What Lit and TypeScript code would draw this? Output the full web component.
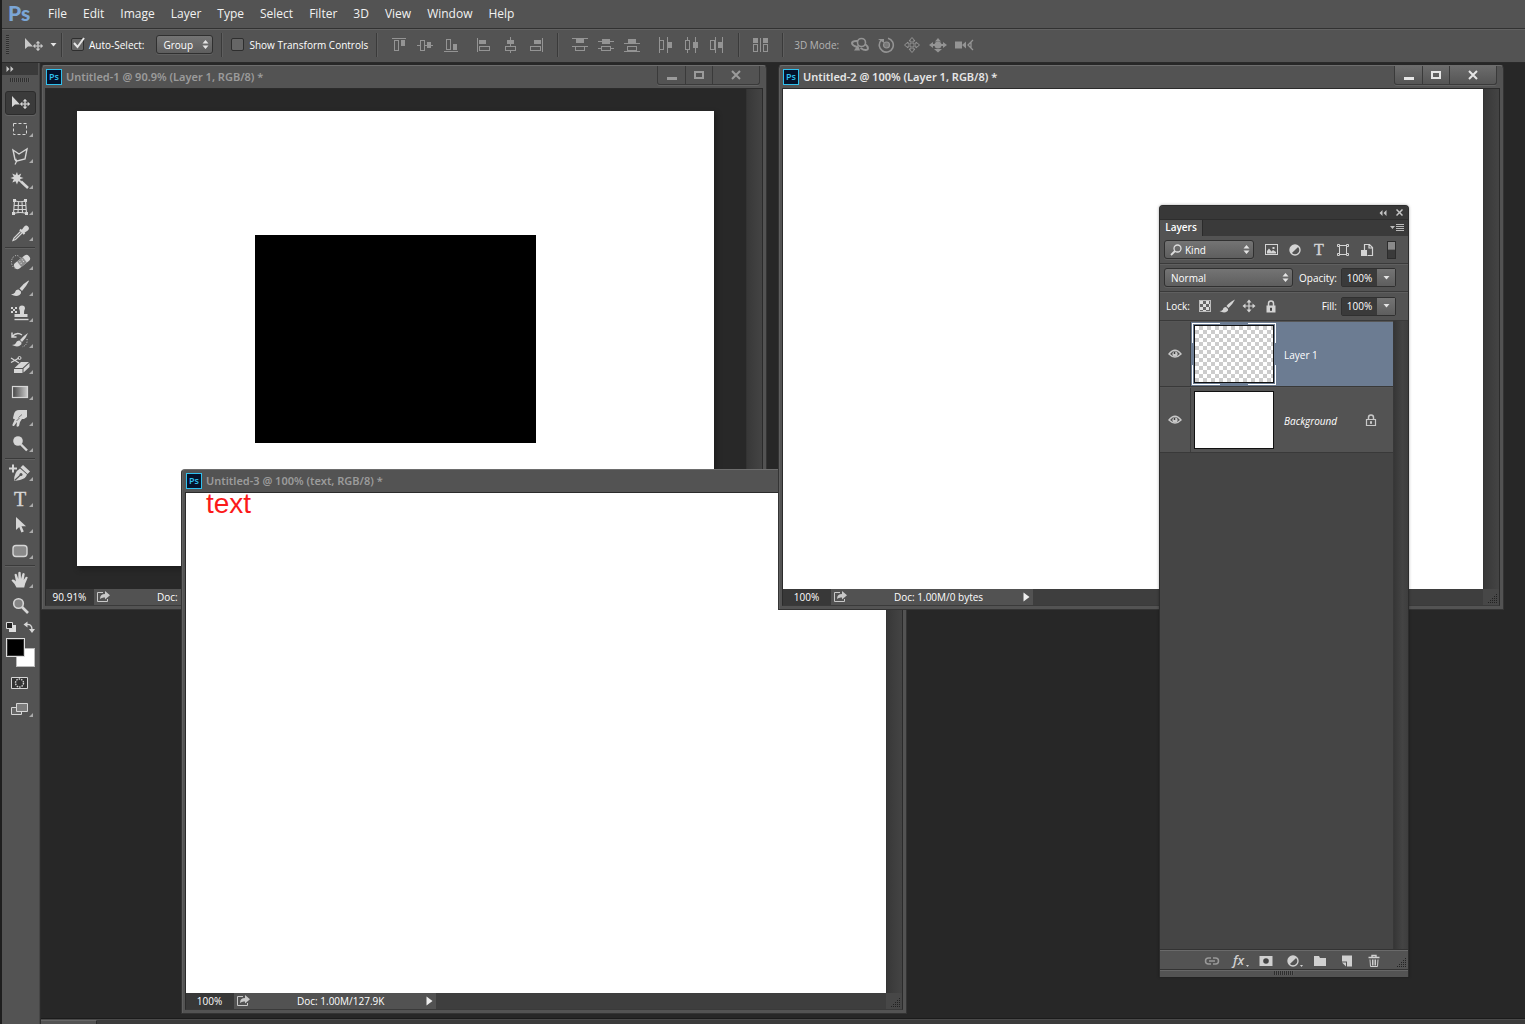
import { LitElement, html, svg, css, TemplateResult } from "lit";
import { customElement, property } from "lit/decorators.js";
import { classMap } from "lit/directives/class-map.js";

/* ---------- icon drawings ---------- */

const cross = (x: number, y: number) => svg`<g transform="translate(${x} ${y})">
  <path d="M0 -5l2 2.2h-1.4v2.2h2.2v-1.4l2.2 2l-2.2 2v-1.4h-2.2v2.2h1.4l-2 2.2l-2-2.2h1.4v-2.2h-2.2v1.4l-2.2-2l2.2-2v1.4h2.2v-2.2h-1.4z" fill="currentColor" stroke="currentColor" stroke-width="0.300"/></g>`;

const moveArt = svg`<path d="M5 6v11l3-2.600h5z" fill="currentColor"/>${cross(18, 14)}`;

const eyeArt = svg`<path d="M1 7q6-7.500 12 0q-6 6-12 0z" fill="none" stroke="currentColor" stroke-width="1.400"/><circle cx="7" cy="7" r="2.600" fill="currentColor"/><circle cx="6.500" cy="6" r="0.900" fill="#333"/>`;

const lockArt = svg`<path d="M4.500 7V4.500q0-2.500 2.500-2.500t2.500 2.500V7" fill="none" stroke="currentColor" stroke-width="1.500"/><path d="M2.500 6.500h9v7h-9z" fill="currentColor"/><path d="M6.500 9h1v2.500h-1z" stroke="#444" fill="#444"/>`;

const lockOpenArt = svg`<path d="M4.500 7V4.500q0-2.500 2.500-2.500t2.500 2.500V7" fill="none" stroke="currentColor" stroke-width="1.500"/><path d="M2.500 6.500h9v6h-9z" fill="#555" stroke="currentColor" stroke-width="1.200"/><path d="M6.500 8.500h1v2h-1z" fill="currentColor" stroke="currentColor"/>`;

const halfCircle = svg`<circle cx="7" cy="7" r="5" fill="none" stroke="currentColor" stroke-width="1.400"/><path d="M10.600 3.400A5 5 0 0 0 3.400 10.600z" fill="currentColor"/>`;

/* tool palette, 26 x 26 */
const TOOLS: Record<string, TemplateResult<2>> = {
  move: moveArt,
  marquee: svg`<rect x="6.500" y="7.500" width="13" height="11" fill="none" stroke="currentColor" stroke-dasharray="3 2"/>`,
  lasso: svg`<path d="M6 8l6 4l8-5l-2 10l-8 2l-2-1.500z" fill="none" stroke="currentColor" stroke-width="1.400"/><path d="M9.500 17q-2 1 0 2.500l-1.500 3" fill="none" stroke="currentColor" stroke-width="1.200"/>`,
  wand: svg`<path d="M10 4l1 3.200l3.200-1.700l-1.200 3.200l3.500 1.300l-3.500 1.200l1.500 3.300l-3.300-1.300l-1.200 3.300l-1.500-3.300l-3.200 1.300l1.500-3.300l-3.300-1.200l3.300-1.300l-1.600-3.200l3.300 1.500z" fill="currentColor"/><path d="M14 13.500l7 6.500" stroke="currentColor" stroke-width="2.600"/>`,
  crop: svg`<path d="M7.500 6.500q6 2.500 11 0l1 13q-6-2-13 0zM7 11.500h12M7 15.500h12.500M11.500 7.500l-.500 11M15 7.500l.5 11" fill="none" stroke="currentColor" stroke-width="1.100"/><path d="M6 5h3v3h-3zM17 5h3v3h-3zM5 18h3v3h-3zM18 18h3v3h-3z" fill="currentColor"/>`,
  dropper: svg`<path d="M13 9.500l4.500 4.500" stroke="currentColor" stroke-width="2.200"/><path d="M15 11l2.500-3.500q1.500-2 3-.5t-.5 3L16.500 12.500z" fill="currentColor" stroke="currentColor" stroke-width="1.600"/><path d="M13.500 11.500l-6.500 6.500l-1 2.500l2.500-1l6.500-6.500" fill="none" stroke="currentColor" stroke-width="1.200"/>`,
  heal: svg`<ellipse cx="9.500" cy="13" rx="5" ry="6.500" fill="none" stroke="currentColor" stroke-dasharray="1 1.500"/><g transform="rotate(-38 15 13)"><rect x="6" y="9.500" width="18" height="7" rx="3" fill="currentColor"/><rect x="11.500" y="9.500" width="7" height="7" fill="#8b8b8b"/><path d="M13.500 11v4M16.500 11v4" stroke="#ddd" stroke-dasharray="1 1"/></g>`,
  brush: svg`<path d="M21.500 5.500q-4.500 2.500-9 8l2.500 2.500q4.500-5 7-10z" fill="currentColor"/><path d="M11.500 14.500q-3 0-3.500 3q-1 1.500-4 2q5 2.500 8.500.500q2-1.500 1.500-3.500z" fill="currentColor"/>`,
  stamp: svg`<path d="M4 6h2v2h-2zM8 6h2v2h-2zM6 8h2v2h-2zM4 10h2v2h-2zM8 10h2v2h-2z" fill="currentColor"/><path d="M12 7.500a3 3 0 1 1 6 0q-1.500 3-1 5.500h3.500v3h-13v-3h5.500q.5-2.500-1-5.500z" fill="currentColor"/><path d="M7.500 18.500h14" stroke="currentColor" stroke-width="1.400"/>`,
  history: svg`<path d="M5 9.500q5-5 10-1.500M5 5.500v4.500h4.500" fill="none" stroke="currentColor" stroke-width="1.500"/><path d="M21 6q-5 3-8 7l2 2q4-4 6-9z" fill="currentColor"/><path d="M12.500 13.500q-3 0-3.500 2.500q-1 2-4 2q5 2.500 8 .500q2-1 1.500-3z" fill="currentColor"/><path d="M20 12q1 6-5 8" fill="none" stroke="currentColor" stroke-dasharray="1 1.500"/>`,
  eraser: svg`<path d="M7.500 15l6.500-6h8l-6.500 6zM7 16h8.500v4h-8.500zM16.500 19.500v-4l6-5.500v4z" fill="currentColor"/><path d="M4 5l8 5M4 9.500l8-4.500" stroke="currentColor" stroke-width="1.200"/><circle cx="12.500" cy="5" r="1.500" fill="none" stroke="currentColor"/>`,
  gradient: svg`<defs><linearGradient id="gt"><stop offset="0" stop-color="#444"/><stop offset="1" stop-color="#ccc"/></linearGradient></defs><rect x="5.500" y="7.500" width="15" height="11" fill="url(#gt)" stroke="currentColor" stroke-width="1.200"/>`,
  smudge: svg`<path d="M7 9q1-4 5-4h8v7l-3 2h-2l-2 3l-1 4q-2 1.500-2.500 0l.5-4l-3 4q-2 .5-1.500-1.500l2.500-5.500q-2 .5-2-1z" fill="currentColor"/><path d="M11.500 12.500l3.500-3M9.500 16l3-3" stroke="#777"/>`,
  dodge: svg`<circle cx="11" cy="10" r="4.800" fill="currentColor"/><path d="M14 13.500l6 6" stroke="currentColor" stroke-width="2.400"/>`,
  pen: svg`<path d="M2 8.500h8M6 4.500v8" stroke="currentColor" stroke-width="2"/><path d="M16 5l7 6.500l-2.500 2.500l-7-6.500z" fill="currentColor"/><path d="M13 8.500l7 6q-1 4-7 5.500l-6 1q0-9 6-12.500z" fill="currentColor"/><path d="M7.500 20.500l6-5.500" stroke="#555" stroke-width="1.200"/><circle cx="14" cy="14.500" r="1.500" fill="#555"/>`,
  type: svg`<text x="13" y="20" text-anchor="middle" font-family="Liberation Serif, serif" font-size="20" fill="currentColor" stroke="currentColor" stroke-width="0.400">T</text>`,
  select: svg`<path d="M9 5v13l3.200-3l2.200 5.500l2.400-1l-2.300-5.300h4.500z" fill="currentColor"/>`,
  shape: svg`<rect x="6" y="7.500" width="14" height="11" rx="3" fill="#8a8a8a" stroke="currentColor" stroke-width="1.400"/>`,
  hand: svg`<path d="M9.500 20.500q-1-3-5-7q1-2 3.500 0l1 1l-1.500-7q1.500-1.500 2.300 0l1.500 4.500v-6.500q1.500-1.500 2.400 0l.3 6.500l1.500-5.500q1.500-1 2.200.5l-1 6l2-3q1.500-.8 2 .5q-1.500 4-2.500 6l-1 4z" fill="currentColor"/>`,
  zoom: svg`<circle cx="11.500" cy="10.500" r="4.800" fill="#858585" stroke="currentColor" stroke-width="1.600"/><path d="M15 14l6 6" stroke="currentColor" stroke-width="2.600"/>`,
};

/* alignment buttons, 16 x 16 */
const o = (x: number, y: number, w: number, h: number) =>
  svg`<rect x=${x + 0.5} y=${y + 0.5} width=${w - 1} height=${h - 1} fill="none" stroke="currentColor"/>`;
const f = (x: number, y: number, w: number, h: number) =>
  svg`<rect x=${x} y=${y} width=${w} height=${h} fill="currentColor"/>`;

const ALIGN: [string, TemplateResult<2>][][] = [
  [
    ["Align top edges", svg`${f(1, 1, 14, 1)}${o(3, 3, 5, 11)}${f(10, 3, 4, 6)}`],
    ["Align vertical centers", svg`${f(0, 8, 3, 1)}${o(3, 3, 5, 11)}${f(8, 8, 8, 1)}${f(10, 5, 4, 6)}`],
    ["Align bottom edges", svg`${f(1, 14, 14, 1)}${o(3, 2, 5, 11)}${f(10, 7, 4, 6)}`],
  ],
  [
    ["Align left edges", svg`${f(1, 1, 1, 14)}${f(3, 3, 7, 4)}${o(3, 9, 11, 5)}`],
    ["Align horizontal centers", svg`${f(8, 0, 1, 3)}${f(5, 3, 7, 4)}${f(8, 6, 1, 3)}${o(3, 9, 11, 5)}${f(8, 13, 1, 3)}`],
    ["Align right edges", svg`${f(14, 1, 1, 14)}${f(6, 3, 7, 4)}${o(2, 9, 11, 5)}`],
  ],
  [
    ["Distribute top edges", svg`${f(0, 1, 16, 1)}${f(4, 2, 8, 4)}${f(0, 9, 16, 1)}${o(3, 9, 10, 5)}`],
    ["Distribute vertical centers", svg`${f(0, 4, 16, 1)}${f(4, 2, 8, 5)}${f(0, 11, 3, 1)}${o(3, 9, 10, 5)}${f(13, 11, 3, 1)}`],
    ["Distribute bottom edges", svg`${f(4, 2, 8, 4)}${f(0, 6, 16, 1)}${o(3, 9, 10, 5)}${f(0, 14, 16, 1)}`],
  ],
  [
    ["Distribute left edges", svg`${f(2, 0, 1, 16)}${o(2, 3, 5, 10)}${f(10, 0, 1, 16)}${f(11, 5, 4, 6)}`],
    ["Distribute horizontal centers", svg`${f(4, 0, 1, 3)}${o(2, 3, 5, 10)}${f(4, 13, 1, 3)}${f(12, 0, 1, 16)}${f(10, 5, 5, 6)}`],
    ["Distribute right edges", svg`${o(1, 3, 5, 10)}${f(6, 0, 1, 16)}${f(9, 5, 4, 6)}${f(13, 0, 1, 16)}`],
  ],
  [["Auto-align layers", svg`${f(0, 1, 5, 5)}${o(0, 7, 5, 8)}${f(7, 1, 1, 14)}${f(10, 1, 5, 5)}${o(10, 7, 5, 8)}`]],
];

/* 3D modes, 20 x 16 */
const MODES: [string, TemplateResult<2>][] = [
  ["Rotate the 3D object", svg`<circle cx="11.500" cy="5.500" r="4" fill="none" stroke="currentColor" stroke-width="1.600"/><path d="M8 4q-5.500-.5-6 2q0 2.500 5 4M15 7q4 3 2.500 5.500q-2.500 1.500-7-1.500" fill="none" stroke="currentColor" stroke-width="2"/><path d="M4 13.500h6l-2-6z" fill="currentColor"/>`],
  ["Roll the 3D object", svg`<path d="M5 3.500a7 7 0 1 0 7-2.200" fill="none" stroke="currentColor" stroke-width="1.600"/><circle cx="10.500" cy="8" r="3" fill="#777" stroke="currentColor" stroke-width="1.200"/><path d="M2 2h6v4z" fill="currentColor"/>`],
  ["Drag the 3D object", svg`<path d="M10 .5l3 3.500h-2v3h3v-2l3.500 3l-3.500 3v-2h-3v3h2l-3 3.500l-3-3.500h2v-3h-3v2l-3.500-3l3.500-3v2h3v-3h-2z" fill="none" stroke="currentColor"/>`],
  ["Slide the 3D object", svg`<path d="M10 1l3 3.500h-6zM10 15.500l4-3.500h-8zM1 8l4-3v6zM19 8l-4-3v6z" fill="currentColor"/><path d="M5 8h10" stroke="currentColor" stroke-width="2"/><circle cx="10" cy="8" r="3.500" fill="currentColor"/>`],
  ["Zoom the 3D camera", svg`<path d="M1 4.500h7v7h-7zM8 8l4-3.500v7z" fill="currentColor"/><path d="M19 3l-5 5l5 5M17 5v6" fill="none" stroke="currentColor" stroke-width="1.300"/>`],
];

const TOOL_GROUPS = [
  ["move", "marquee", "lasso", "wand", "crop", "dropper"],
  ["heal", "brush", "stamp", "history", "eraser", "gradient", "smudge", "dodge"],
  ["pen", "type", "select", "shape"],
  ["hand", "zoom"],
];

const MENUS = ["File", "Edit", "Image", "Layer", "Type", "Select", "Filter", "3D", "View", "Window", "Help"];

const base = css`
  * { box-sizing: border-box; }
  button, select, input { font: inherit; color: inherit; margin: 0; padding: 0; border: 0; border-radius: 0; background: none; }
  button { display: flex; align-items: center; justify-content: center; }
  svg { display: block; flex: none; }
`;

const fieldStyles = css`
  .pick { position: relative; display: flex; align-items: center; }
  .pick select {
    appearance: none; width: 100%; height: 19px; padding: 0 6px;
    border: 1px solid #303030; border-radius: 3px; color: #fff;
    background: linear-gradient(#747474, #5e5e5e); box-shadow: 0 1px #606060;
  }
  .pick .updown { position: absolute; right: 4px; top: 5px; pointer-events: none; }
`;

const upDown = html`<svg class="updown" width="7" height="9" viewBox="0 0 7 9" fill="#e4e4e4"><path d="M3.500 0L6.500 3.500h-6zM3.500 9L6.500 5.500h-6z"/></svg>`;
const caret = html`<svg width="7" height="4" viewBox="0 0 7 4"><path d="M0.500 0h6L3.500 3.500z" fill="#e4e4e4"/></svg>`;
const sizeGrip = html`<svg width="12" height="12" viewBox="0 0 12 12" fill="#222"><path d="M9 1h1v1h-1zM7 3h1v1h-1zM9 3h1v1h-1zM5 5h1v1h-1zM7 5h1v1h-1zM9 5h1v1h-1zM3 7h1v1h-1zM5 7h1v1h-1zM7 7h1v1h-1zM9 7h1v1h-1zM1 9h1v1h-1zM3 9h1v1h-1zM5 9h1v1h-1zM7 9h1v1h-1zM9 9h1v1h-1z"/></svg>`;

/* ---------- document window ---------- */

@customElement("doc-window")
class DocWindow extends LitElement {
  @property() name = "";
  @property() zoom = "100%";
  @property() info = "Doc:";
  @property({ type: Boolean, reflect: true }) active = false;

  static styles = [base, css`
    :host {
      display: grid; grid-template-rows: 22px 1fr 3px; padding: 0 3px;
      border: 1px solid #343434; border-top-color: #6d6d6d; border-radius: 4px 4px 0 0;
      background: #535353; color: #9b9b9b;
      box-shadow: inset 1px 0 #606060;
    }
    :host([active]) { color: #e6e6e6; }
    .title { display: flex; align-items: center; gap: 4px; }
    .badge {
      width: 16px; height: 16px; margin-left: 1px; border: 1px solid #2fc1ef; background: #04122a; color: #2fc1ef;
      font: 600 9px/13px "Open Sans", sans-serif; text-align: center;
    }
    h2 { margin: 0; flex: 1; font: 600 11px/16px "Noto Sans", sans-serif; white-space: nowrap; }
    .ctl { display: flex; align-self: start; margin-right: 3px; border: 1px solid #3a3a3a; border-top: 0; border-radius: 0 0 3px 3px; box-shadow: 0 1px #636363; }
    .ctl button { width: 27px; height: 18px; }
    .ctl button + button { border-left: 1px solid #3a3a3a; }
    .ctl button:last-child { width: 47px; }
    :host([active]) .ctl { background: linear-gradient(#6c6c6c, #555); }
    .inner { display: grid; grid-template-columns: 1fr 16px; grid-template-rows: 1fr 16px; border: 1px solid #2b2b2b; border-bottom-color: #3a3a3a; min-height: 0; }
    .page { display: flex; background: #282828; overflow: hidden; }
    .vbar { background: linear-gradient(90deg, #383838, #444); border-left: 1px solid #333; }
    .status { display: flex; background: #3e3e3e; color: #fff; font: 10px/16px "Open Sans", sans-serif; }
    .status input { width: 48px; padding-right: 1px; text-align: center; background: #383838; color: #fff; }
    .cells { display: flex; align-items: center; width: 202px; background: #525252; }
    .cells span { flex: 1; padding-left: 45px; white-space: nowrap; }
    .cells .more { width: 14px; }
    .corner { display: flex; align-items: end; justify-content: end; background: #474747; }
  `];

  render() {
    return html`
      <div class="title">
        <span class="badge">Ps</span>
        <h2>${this.name}</h2>
        <div class="ctl">
          <button aria-label="Minimize"><svg width="12" height="12" viewBox="0 0 12 12"><path d="M1 8h10v3h-10z" fill="currentColor"/></svg></button>
          <button aria-label="Maximize"><svg width="12" height="12" viewBox="0 0 12 12"><path d="M2 3h8v6h-8z" fill="none" stroke="currentColor" stroke-width="2"/></svg></button>
          <button aria-label="Close"><svg width="12" height="12" viewBox="0 0 12 12"><path d="M2 2l8 8M10 2l-8 8" stroke="currentColor" stroke-width="2"/></svg></button>
        </div>
      </div>
      <div class="inner">
        <div class="page"><slot></slot></div>
        <div class="vbar"></div>
        <div class="status">
          <input aria-label="Zoom" .value=${this.zoom} />
          <div class="cells">
            <button aria-label="Share"><svg width="18" height="14" viewBox="0 0 18 14"><path d="M9 2.500H3.500v9h10V9" fill="none" stroke="#c8c8c8"/><path d="M6 9q0-5 5-5V1l5 4.300L11 9.500V7.500Q8 7 6 9z" fill="#c8c8c8"/></svg></button>
            <span>${this.info}</span>
            <button class="more" aria-label="Status options"><svg width="7" height="10" viewBox="0 0 7 10"><path d="M0.500 0.500v9L6.500 5z" fill="#eee"/></svg></button>
          </div>
        </div>
        <div class="corner">${sizeGrip}</div>
      </div>`;
  }
}

/* ---------- layers panel ---------- */

const FILTERS: [string, TemplateResult<2>][] = [
  ["Filter for pixel layers", svg`<rect x="1.500" y="1.500" width="12" height="10" fill="none" stroke="currentColor"/><path d="M3 10.500V8l2-2.500l2.500 3L9 7l3 2v1.500zM8.500 4h2v2h-2z" fill="currentColor"/>`],
  ["Filter for adjustment layers", svg`${halfCircle}`],
  ["Filter for type layers", svg`<text x="7" y="12" text-anchor="middle" font-family="Liberation Serif, serif" font-size="16" fill="currentColor" stroke="currentColor" stroke-width="0.400">T</text>`],
  ["Filter for shape layers", svg`<path d="M3.500 3v8M10.500 3v8M3 2.500h8M3 11.500h8" stroke="currentColor"/><path d="M1.500 1.500h2v2h-2zM10.500 1.500h2v2h-2zM1.500 10.500h2v2h-2zM10.500 10.500h2v2h-2z" fill="#535353" stroke="currentColor"/>`],
  ["Filter for smart objects", svg`<path d="M4.500 8V1.500h5l3 3v8h-5M9 1.500v3.500h3.500" fill="none" stroke="currentColor" stroke-width="1.200"/><path d="M1 7h6v6h-6z" fill="currentColor"/>`],
];

const LOCKS: [string, TemplateResult<2>][] = [
  ["Lock transparent pixels", svg`<rect x="1.500" y="1.500" width="11" height="11" fill="#666" stroke="#bbb"/><path d="M2 2h3v3h-3zM8 2h3v3h-3zM5 5h3v3h-3zM11 5h1v3h-1zM2 8h3v3h-3zM8 8h3v3h-3zM5 11h3v1h-3z" fill="#ddd"/>`],
  ["Lock image pixels", svg`<path d="M15 0.500q-6 3-8.500 6.500l2 2q4-3.500 6.500-8.500zM6 8q-3 0-3 2.500q-1 1.500-3.500 1.500q4.500 2.500 7.500.5q1.500-1 1-2.500z" fill="currentColor"/>`],
  ["Lock position", svg`<path d="M7 .5l2.500 3H4.500zM7 13.500l2.500-3H4.500zM.5 7l3-2.500v5zM13.500 7l-3-2.500v5z" fill="currentColor"/><path d="M7 2v10M2 7h10" stroke="currentColor" stroke-width="1.200"/>`],
  ["Lock all", lockArt],
];

const FOOT: [string, TemplateResult<2>][] = [
  ["Link layers", svg`<g fill="none" stroke="#999" stroke-width="1.500"><path d="M6 10H3.500a3 3 0 0 1 0-6H6M8 4h2.500a3 3 0 0 1 0 6H8M4 7h6"/></g>`],
  ["Add a layer style", svg`<text x="1" y="11" font-family="Open Sans, sans-serif" font-style="italic" font-weight="600" font-size="13" fill="currentColor">fx</text><path d="M14 11h3l-1.500 2z" fill="currentColor"/>`],
  ["Add a mask", svg`<path d="M0.500 2h13v10h-13z" fill="currentColor"/><circle cx="7" cy="7" r="2.800" fill="#444"/>`],
  ["New fill or adjustment layer", svg`${halfCircle}<path d="M14 11h3l-1.500 2z" fill="currentColor"/>`],
  ["New group", svg`<path d="M1 2h5l1 2h6v8h-12z" fill="currentColor"/>`],
  ["New layer", svg`<path d="M2 1.500h10v11h-5V7.500h-5z" fill="currentColor"/><path d="M2 8.500h4v4z" fill="currentColor"/>`],
  ["Delete layer", svg`<path d="M1.500 3.500h11M5 3V1.500h4V3" fill="none" stroke="currentColor" stroke-width="1.400"/><path d="M3 5.500l.5 7h7l.5-7M5.500 5.500v6M7 5.500v6M8.500 5.500v6" fill="none" stroke="currentColor"/>`],
];

const icon14 = (d: TemplateResult<2>) => html`<svg width="14" height="14" viewBox="0 0 14 14" overflow="visible">${d}</svg>`;

@customElement("layers-panel")
class LayersPanel extends LitElement {
  static styles = [base, fieldStyles, css`
    :host {
      display: flex; flex-direction: column; border: 1px solid #2c2c2c; border-bottom: 0; border-radius: 4px 4px 0 0;
      background: #535353; color: #fff; font: 10px/14px "Open Sans", sans-serif; box-shadow: 0 0 3px rgba(0,0,0,.35);
    }
    .head { display: flex; justify-content: end; align-items: center; gap: 9px; height: 13px; padding-right: 5px; background: #383838; border-radius: 3px 3px 0 0; color: #c4c4c4; }
    .tabs { display: flex; justify-content: space-between; height: 17px; background: #3a3a3a; border-top: 1px solid #2d2d2d; }
    .tab { width: 43px; background: #535353; border-right: 1px solid #2b2b2b; font-weight: 600; line-height: 12px; padding-bottom: 2px; }
    .tabs .menu { margin-right: 4px; color: #bbb; }
    .row { display: flex; align-items: center; height: 28px; padding: 0 12px 0 4px; border-bottom: 1px solid #3a3a3a; box-shadow: inset 0 1px #5f5f5f; }
    .tabs + .row { box-shadow: none; }
    .row.last { height: 29px; }
    .row > span { padding-left: 2px; }
    .kind { width: 90px; }
    .kind select { padding-left: 20px; }
    .kind .glass { position: absolute; left: 6px; pointer-events: none; }
    .icons { display: flex; flex: 1; justify-content: space-between; padding: 0 13px 0 10px; color: #d4d4d4; }
    .switch { width: 9px; height: 18px; border: 1px solid #2c2c2c; background: linear-gradient(#8a8a8a 45%, #3a3a3a 50%); }
    .mode { width: 129px; }
    .val { margin-left: auto; display: flex; align-items: center; gap: 4px; }
    .combo { display: flex; height: 19px; border: 1px solid #303030; border-radius: 2px; }
    .combo input { width: 35px; background: #3a3a3a; text-align: center; color: #fff; }
    .combo button { width: 18px; background: linear-gradient(#747474, #5e5e5e); }
    .locks { display: flex; gap: 8px; margin-left: 8px; color: #d4d4d4; }
    .list { flex: 1; display: grid; grid-template-columns: 1fr 15px; border-bottom: 1px solid #333; background: #454545; }
    .track { background: linear-gradient(90deg, #363636, #444 60%, #3e3e3e); border-left: 1px solid #383838; }
    ul { margin: 0; padding: 0; list-style: none; }
    li { display: flex; align-items: stretch; height: 66px; background: #535353; border-bottom: 1px solid #393939; border-top: 1px solid #565656; }
    .eye { width: 31px; border-right: 1px solid #3c3c3c; color: #c8c8c8; }
    .body { display: flex; flex: 1; align-items: center; padding: 0 15px 0 1px; }
    .on .body { background: #6c7c92; }
    .frame { display: grid; place-items: center; width: 84px; height: 62px; }
    .on .frame {
      background:
        linear-gradient(#fff, #fff) 0 0 / 28px 1px, linear-gradient(#fff, #fff) 100% 0 / 28px 1px,
        linear-gradient(#fff, #fff) 0 100% / 28px 1px, linear-gradient(#fff, #fff) 100% 100% / 28px 1px,
        linear-gradient(#fff, #fff) 0 0 / 1px 20px, linear-gradient(#fff, #fff) 100% 0 / 1px 20px,
        linear-gradient(#fff, #fff) 0 100% / 1px 20px, linear-gradient(#fff, #fff) 100% 100% / 1px 20px;
      background-repeat: no-repeat;
    }
    .thumb { width: 80px; height: 58px; border: 1px solid #111; background: #fff; }
    .on .thumb { background: repeating-conic-gradient(#ccc 0 25%, #fff 0 50%) 0 0 / 8px 8px; }
    .label { flex: 1; padding: 2px 0 0 8px; }
    .base .label { font-style: italic; }
    .base .lock { color: #c8c8c8; }
    .foot { display: flex; justify-content: end; align-items: center; height: 20px; padding-top: 2px; border-top: 1px solid #6a6a6a; border-bottom: 1px solid #333; color: #d0d0d0; }
    .foot button { width: 27px; height: 16px; }
    .foot .grip { display: flex; align-items: end; justify-content: end; width: 21px; height: 16px; }
    .end { display: flex; justify-content: center; height: 7px; border-top: 1px solid #666; }
    .end i { width: 20px; height: 4px; background: repeating-linear-gradient(90deg, #2e2e2e 0 1px, #5a5a5a 1px 2px); }
  `];

  render() {
    return html`
      <div class="head">
        <button aria-label="Collapse"><svg width="8" height="6" viewBox="0 0 8 6" fill="currentColor"><path d="M3.500 0v6L0.500 3zM7.500 0v6L4.500 3z"/></svg></button>
        <button aria-label="Close panel"><svg width="7" height="7" viewBox="0 0 7 7"><path d="M0.500 0.500l6 6M6.500 0.500l-6 6" stroke="currentColor" stroke-width="1.500"/></svg></button>
      </div>
      <div class="tabs">
        <button class="tab">Layers</button>
        <button class="menu" aria-label="Panel menu"><svg width="14" height="9" viewBox="0 0 14 9" fill="currentColor"><path d="M0 2h5L2.500 5zM6 0h8v1h-8zM6 2h8v1h-8zM6 4h8v1h-8zM6 6h8v1h-8z"/></svg></button>
      </div>
      <div class="row">
        <label class="pick kind">
          <select aria-label="Filter type"><option>Kind</option></select>
          <svg class="glass" width="12" height="12" viewBox="0 0 12 12"><circle cx="7.500" cy="4.500" r="3.500" fill="none" stroke="#ddd" stroke-width="1.300"/><path d="M5 7l-4 4" stroke="#ddd" stroke-width="1.800"/></svg>
          ${upDown}
        </label>
        <div class="icons">${FILTERS.map(([n, d]) => html`<button aria-label=${n}>${icon14(d)}</button>`)}</div>
        <button class="switch" aria-label="Layer filtering"></button>
      </div>
      <div class="row">
        <label class="pick mode"><select aria-label="Blend mode"><option>Normal</option></select>${upDown}</label>
        <div class="val">
          <label for="op">Opacity:</label>
          <div class="combo"><input id="op" value="100%" /><button aria-label="Opacity slider">${caret}</button></div>
        </div>
      </div>
      <div class="row last">
        <span>Lock:</span>
        <div class="locks">${LOCKS.map(([n, d]) => html`<button aria-label=${n}>${icon14(d)}</button>`)}</div>
        <div class="val">
          <label for="fill">Fill:</label>
          <div class="combo"><input id="fill" value="100%" /><button aria-label="Fill slider">${caret}</button></div>
        </div>
      </div>
      <div class="list">
        <ul>
          <li class="on">
            <button class="eye" aria-label="Visibility">${icon14(eyeArt)}</button>
            <div class="body"><div class="frame"><div class="thumb"></div></div><span class="label">Layer 1</span></div>
          </li>
          <li class="base">
            <button class="eye" aria-label="Visibility">${icon14(eyeArt)}</button>
            <div class="body"><div class="frame"><div class="thumb"></div></div><span class="label">Background</span><span class="lock">${icon14(lockOpenArt)}</span></div>
          </li>
        </ul>
        <div class="track"></div>
      </div>
      <div class="foot">
        ${FOOT.map(([n, d]) => html`<button aria-label=${n}>${icon14(d)}</button>`)}
        <span class="grip">${sizeGrip}</span>
      </div>
      <div class="end"><i></i></div>`;
  }
}

/* ---------- application shell ---------- */

@customElement("app-root")
class AppRoot extends LitElement {
  static styles = [base, fieldStyles, css`
    :host {
      display: grid; grid-template-rows: 28px 35px 1fr; min-height: 100vh; border-left: 2px solid #1e1e1e; box-sizing: border-box;
      background: #535353; color: #fff; font: 10px/14px "Open Sans", sans-serif; overflow: hidden;
    }
    .menubar { display: flex; align-items: center; padding-left: 6px; color: #f2f2f2; font: 12px/16px "Open Sans", sans-serif; }
    .logo { width: 32px; padding-bottom: 2px; font: 900 21px/24px Lato, sans-serif; color: #7ba6d6; }
    .menubar button { padding: 0 8px; height: 24px; }
    .options { display: flex; align-items: center; padding-bottom: 2px; border-top: 1px solid #323232; border-bottom: 1px solid #2a2a2a; box-shadow: inset 0 1px #626262; }
    .options .grip { width: 3px; height: 19px; margin: 0 15px 0 4px; background: repeating-linear-gradient(#2f2f2f 0 1px, #5c5c5c 1px 2px); }
    .rule { width: 2px; height: 24px; border-left: 1px solid #3a3a3a; border-right: 1px solid #5e5e5e; margin: 0 8px; }
    .preset { gap: 4px; margin-right: -4px; color: #c8c8c8; }
    .check { display: flex; align-items: center; gap: 5px; white-space: nowrap; }
    .check input { appearance: none; width: 13px; height: 13px; border: 1px solid #2e2e2e; border-radius: 2px; background: #666; display: grid; place-items: center; }
    .tick { position: relative; display: grid; }
    .tick svg { position: absolute; left: 1px; top: -2px; pointer-events: none; }
    .group { width: 57px; margin-left: 12px; }
    .set { display: flex; color: #949494; }
    .set + .set { margin-left: 7px; }
    .set button { width: 26px; height: 24px; }
    .mode { color: #b4b4b4; margin: 0 8px 0 2px; }
    .work { display: grid; grid-template-columns: 39px 1fr; min-height: 0; }
    .tools { display: flex; flex-direction: column; align-items: center; padding-right: 2px; border-right: 1px solid #2b2b2b; box-shadow: inset -1px 0 #454545; color: #d6d6d6; }
    .expand { align-self: stretch; justify-content: start; height: 12px; padding-left: 4px; background: #3a3a3a; color: #c8c8c8; }
    .tools .grip { width: 20px; height: 4px; margin: 3px 0 8px; background: repeating-linear-gradient(90deg, #2f2f2f 0 1px, #5c5c5c 1px 2px); }
    .tool { width: 31px; height: 26px; position: relative; }
    .tool::after { content: ""; position: absolute; right: 3px; bottom: 5px; border: 2px solid transparent; border-right-color: #aaa; border-bottom-color: #aaa; }
    .tool.plain::after { display: none; }
    .tool.on { height: 24px; margin: 1px 0; border: 1px solid #2c2c2c; border-radius: 3px; background: #3b3b3b; box-shadow: 0 1px #636363; }
    .split { width: 30px; height: 3px; border-top: 1px solid transparent; border-bottom: 1px solid #606060; background: #3a3a3a; background-clip: padding-box; }
    .mini { display: flex; gap: 6px; margin: 2px 0 5px; }
    .swatches { display: grid; grid-template-columns: 10px 9px 10px; grid-template-rows: 10px 9px 10px; margin-bottom: 3px; }
    .fg { grid-area: 1 / 1 / 3 / 3; background: #000; border: 1px solid #ddd; outline: 1px solid #333; outline-offset: -2px; z-index: 1; }
    .bg { grid-area: 2 / 2 / 4 / 4; background: #fff; border: 1px solid #bbb; }
    .desk { position: relative; display: flex; flex-direction: column; justify-content: end; overflow: hidden; background: #272727; }
    .win { position: absolute; width: 726px; height: 545px; }
    .one { left: 0; top: 2px; }
    .three { left: 140px; top: 406px; }
    .two { left: 737px; top: 2px; }
    .layers { position: absolute; left: 1118px; top: 142px; width: 250px; height: 772px; }
    .dock { display: flex; height: 6px; border-top: 1px solid #1b1b1b; background: #3b3b3b; box-shadow: inset 0 1px #4a4a4a; }
    .dock i { width: 56px; margin-top: 1px; background: #535353; border-top: 1px solid #666; border-right: 1px solid #2a2a2a; }
    .sheet { flex: 1; margin: 22px 32px 23px 31px; display: grid; place-items: center; background: #fff; box-shadow: 2px 3px 5px #1c1c1c; }
    .box { width: 281px; height: 208px; background: #000; }
    .full { flex: 1; background: #fff; padding-left: 20px; color: #fb1a1a; font: 28px/22px "Liberation Sans", sans-serif; }
  `];

  private tool(name: string) {
    const on = name === "move";
    return html`<button class=${classMap({ tool: true, on, plain: on || name === "zoom" })} aria-label=${name}>
      <svg width="26" height="26" viewBox="0 0 26 26">${TOOLS[name]}</svg>
    </button>`;
  }

  private set(list: [string, TemplateResult<2>][], w = 16) {
    return html`<div class="set">${list.map(([n, d]) => html`<button aria-label=${n}>
      <svg width=${w} height="16" viewBox="0 0 ${w} 16">${d}</svg></button>`)}</div>`;
  }

  render() {
    return html`
      <nav class="menubar">
        <span class="logo">Ps</span>
        ${MENUS.map((m) => html`<button>${m}</button>`)}
      </nav>
      <div class="options">
        <i class="grip"></i>
        <button class="preset" aria-label="Tool preset">
          <svg width="22" height="20" viewBox="4 3 22 20">${moveArt}</svg>${caret}
        </button>
        <i class="rule"></i>
        <label class="check"><span class="tick"><input type="checkbox" checked />
          <svg width="13" height="13" viewBox="0 0 13 13"><path d="M2 7l3.500 4L12 2" fill="none" stroke="#e6e6e6" stroke-width="2"/></svg></span>Auto-Select:</label>
        <label class="pick group"><select aria-label="Auto-select target"><option>Group</option></select>${upDown}</label>
        <i class="rule"></i>
        <label class="check"><input type="checkbox" />Show Transform Controls</label>
        <i class="rule"></i>
        ${this.set(ALIGN[0])}${this.set(ALIGN[1])}
        <i class="rule"></i>
        ${this.set(ALIGN[2])}${this.set(ALIGN[3])}
        <i class="rule"></i>
        ${this.set(ALIGN[4])}
        <i class="rule"></i>
        <span class="mode">3D Mode:</span>
        ${this.set(MODES, 20)}
      </div>
      <div class="work">
        <aside class="tools">
          <button class="expand" aria-label="Expand tools"><svg width="8" height="6" viewBox="0 0 8 6" fill="currentColor"><path d="M0.500 0v6L3.500 3zM4.500 0v6L7.500 3z"/></svg></button>
          <i class="grip"></i>
          ${TOOL_GROUPS.map((g, i) => html`${i ? html`<i class="split"></i>` : ""}${g.map((t) => this.tool(t))}`)}
          <div class="mini">
            <button aria-label="Default colors"><svg width="12" height="12" viewBox="0 0 12 12"><path d="M4 4h7v7h-7z" fill="#ddd"/><path d="M1.500 1.500h6v6h-6z" fill="#222" stroke="#ddd"/></svg></button>
            <button aria-label="Swap colors"><svg width="12" height="12" viewBox="0 0 12 12"><path d="M3 3.500q6-1 6 5" fill="none" stroke="currentColor" stroke-width="1.400"/><path d="M0.500 3.500l4-3v6zM9 12l-3-4h6z" fill="currentColor"/></svg></button>
          </div>
          <div class="swatches">
            <button class="fg" aria-label="Foreground color"></button>
            <button class="bg" aria-label="Background color"></button>
          </div>
          <button class="tool plain" aria-label="Quick mask"><svg width="26" height="26" viewBox="0 0 26 26"><path d="M4.500 7.500h16v11h-16z" fill="#333" stroke="currentColor"/><circle cx="12.500" cy="13" r="4" fill="none" stroke="currentColor" stroke-width="1.400" stroke-dasharray="1.500 1"/></svg></button>
          <button class="tool" aria-label="Screen mode"><svg width="26" height="26" viewBox="0 0 26 26"><path d="M4.500 11.500h10v7h-10z" fill="#666" stroke="currentColor"/><path d="M9.500 7.500h11v8h-11z" fill="#7c7c7c" stroke="currentColor"/></svg></button>
        </aside>
        <main class="desk">
          <doc-window class="win one" name="Untitled-1 @ 90.9% (Layer 1, RGB/8) *" zoom="90.91%" info="Doc:">
            <div class="sheet"><div class="box"></div></div>
          </doc-window>
          <doc-window class="win three" name="Untitled-3 @ 100% (text, RGB/8) *" info="Doc: 1.00M/127.9K">
            <div class="full">text</div>
          </doc-window>
          <doc-window class="win two" active name="Untitled-2 @ 100% (Layer 1, RGB/8) *" info="Doc: 1.00M/0 bytes">
            <div class="full"></div>
          </doc-window>
          <layers-panel class="layers"></layers-panel>
          <div class="dock"><i></i></div>
        </main>
      </div>`;
  }
}
